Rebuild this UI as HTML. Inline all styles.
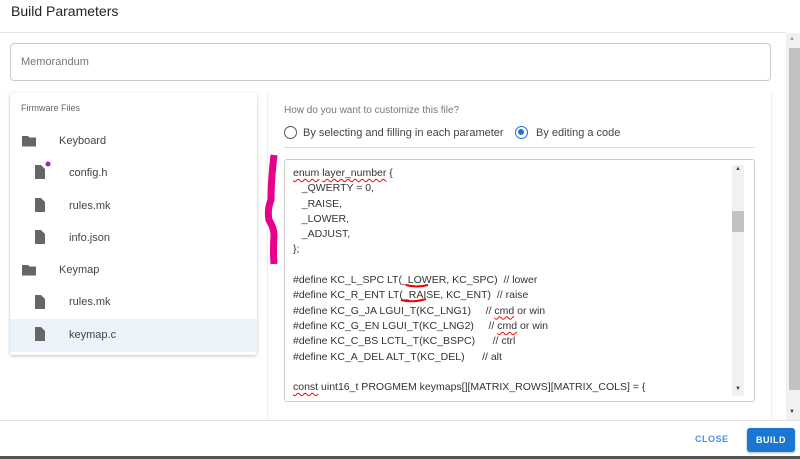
<!DOCTYPE html>
<html><head><style>
*{box-sizing:border-box;margin:0;padding:0}
body{width:800px;height:459px;overflow:hidden;background:#fff;font-family:"Liberation Sans",sans-serif;position:relative;color:#333}
.abs{position:absolute}
.t{font-size:11px;color:#444}
.code div{height:15.3px;white-space:pre}
.sq{text-decoration:underline wavy red;text-decoration-thickness:1px;text-underline-offset:2px}
</style></head><body>
<div class="abs" style="left:11px;top:3px;font-size:14px;color:#222">Build Parameters</div>
<div class="abs" style="left:0;top:32px;width:786px;height:1px;background:#e4e4e4"></div>
<div class="abs" style="left:10px;top:43px;width:761px;height:38px;border:1px solid #ccc;border-radius:4px"></div>
<div class="abs" style="left:21px;top:56px;font-size:11px;color:#777">Memorandum</div>

<div class="abs" style="left:10px;top:93px;width:247px;height:262px;box-shadow:0 1px 3px rgba(0,0,0,.25);border-radius:3px;background:#fff"></div>
<div class="abs" style="left:21px;top:103px;font-size:9px;color:#666">Firmware Files</div>
<div class="abs" style="left:10px;top:319px;width:247px;height:33px;background:#edf3fb"></div>
<svg class="abs" style="left:0;top:0" width="260" height="360">
<g fill="#666">
<path d="M22 136h6l1.5 1.5H36v9H22z"/>
<path d="M22 265h6l1.5 1.5H36v9H22z"/>
<path d="M35 165h6l4 4v10h-10z"/>
<path d="M35 198h6l4 4v10h-10z"/>
<path d="M35 230h6l4 4v10h-10z"/>
<path d="M35 295h6l4 4v10h-10z"/>
<path d="M35 327h6l4 4v10h-10z"/>
</g>
<circle cx="48" cy="164" r="2.5" fill="#a020c0"/>
</svg>
<div class="abs t" style="left:59px;top:135px">Keyboard</div>
<div class="abs t" style="left:69px;top:167px">config.h</div>
<div class="abs t" style="left:69px;top:200px">rules.mk</div>
<div class="abs t" style="left:69px;top:232px">info.json</div>
<div class="abs t" style="left:59px;top:264px">Keymap</div>
<div class="abs t" style="left:69px;top:296px">rules.mk</div>
<div class="abs t" style="left:69px;top:329px">keymap.c</div>

<div class="abs" style="left:267px;top:93px;width:505px;height:328px;border-left:1px solid #eee;border-right:1px solid #eee"></div>
<div class="abs" style="left:284px;top:105px;font-size:10px;color:#777">How do you want to customize this file?</div>
<div class="abs" style="left:284px;top:126px;width:13px;height:13px;border:1.5px solid #555;border-radius:50%"></div>
<div class="abs t" style="left:303px;top:127px">By selecting and filling in each parameter</div>
<div class="abs" style="left:515px;top:126px;width:13px;height:13px;border:1.5px solid #1976d2;border-radius:50%"><div style="margin:2px;width:6px;height:6px;border-radius:50%;background:#1976d2"></div></div>
<div class="abs t" style="left:536px;top:127px">By editing a code</div>
<div class="abs" style="left:284px;top:147px;width:471px;height:1px;background:#ddd"></div>

<div class="abs" style="left:284px;top:159px;width:471px;height:243px;border:1px solid #ccc;border-radius:3px;overflow:hidden">
<div class="abs" style="right:10px;top:5px;width:12px;height:231px;background:#f1f1f1"></div>
<div class="abs" style="right:10px;top:51px;width:12px;height:21px;background:#c1c1c1"></div>
<div class="abs" style="right:13px;top:6px;font-size:6px;color:#444">▲</div>
<div class="abs" style="right:13px;top:226px;font-size:6px;color:#444">▼</div>
<div class="abs code" style="left:8px;top:6px;font-size:10.5px;color:#333;line-height:15.3px">
<div><span class="sq">enum</span> <span class="sq">layer_number</span> {</div>
<div>   _QWERTY = 0,</div>
<div>   _RAISE,</div>
<div>   _LOWER,</div>
<div>   _ADJUST,</div>
<div>};</div>
<div> </div>
<div>#define KC_L_SPC LT(_LOWER, KC_SPC)  // lower</div>
<div>#define KC_R_ENT LT(_RAISE, KC_ENT)  // raise</div>
<div>#define KC_G_JA LGUI_T(KC_LNG1)     // <span class="sq">cmd</span> or win</div>
<div>#define KC_G_EN LGUI_T(KC_LNG2)     // <span class="sq">cmd</span> or win</div>
<div>#define KC_C_BS LCTL_T(KC_BSPC)      // ctrl</div>
<div>#define KC_A_DEL ALT_T(KC_DEL)      // alt</div>
<div> </div>
<div><span class="sq">const</span> uint16_t PROGMEM keymaps[][MATRIX_ROWS][MATRIX_COLS] = {</div>
</div>
</div>
<svg class="abs" style="left:0;top:0" width="800" height="459">
<path d="M406 285q10 3 22 0" stroke="#e00" stroke-width="2" fill="none"/>
<path d="M401 300q12 3 25 -1" stroke="#e00" stroke-width="2" fill="none"/>
<path d="M274 155q-3 25-3 45q-4 10-2 20q5 8 5 15q-1 15 0 29" stroke="#e8008a" stroke-width="7" fill="none"/>
</svg>

<div class="abs" style="left:786px;top:33px;width:14px;height:387px;background:#f1f1f1"></div>
<div class="abs" style="left:789px;top:48px;width:11px;height:342px;background:#c1c1c1"></div>
<div class="abs" style="left:789px;top:36px;font-size:6px;color:#999">▲</div>
<div class="abs" style="left:789px;top:409px;font-size:6px;color:#444">▼</div>
<div class="abs" style="left:0;top:420px;width:800px;height:1px;background:#e4e4e4"></div>
<div class="abs" style="left:695px;top:434px;font-size:9px;font-weight:bold;color:#4a90d9;letter-spacing:.5px">CLOSE</div>
<div class="abs" style="left:747px;top:428px;width:48px;height:24px;background:#1976d2;border-radius:3px;box-shadow:0 1px 2px rgba(0,0,0,.3);color:#fff;font-size:9px;font-weight:bold;text-align:center;line-height:24px;letter-spacing:.5px">BUILD</div>
<div class="abs" style="left:0;top:456px;width:800px;height:3px;background:#555"></div>
</body></html>
